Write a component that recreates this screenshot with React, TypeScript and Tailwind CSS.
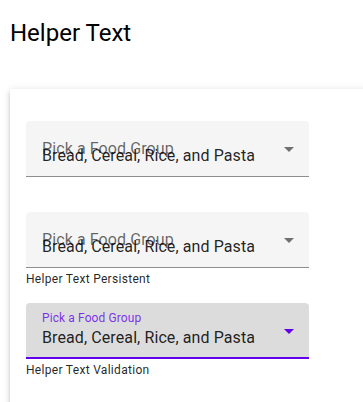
import React from "react";

function Arrow({ color }: { color: string }) {
  return (
    <svg width="24" height="24" viewBox="0 0 24 24" className="absolute right-[8px] top-[16px]">
      <path d="M7 10l5 5 5-5z" fill={color} />
    </svg>
  );
}

function Select({
  focused,
  helper,
  showHelper,
}: {
  focused?: boolean;
  helper?: string;
  showHelper?: boolean;
}) {
  return (
    <div className="flex flex-col w-[283px]">
      <div
        className={
          "relative h-[56px] rounded-t-[4px] " +
          (focused ? "bg-[#dcdcdc]" : "bg-[#f5f5f5]")
        }
      >
        {focused ? (
          <span className="absolute left-[16px] top-[8px] text-[12px] leading-[14px] text-[rgba(98,0,238,0.8)] tracking-[0.1px]">
            Pick a Food Group
          </span>
        ) : (
          <span className="absolute left-[16px] top-[19px] text-[16px] leading-[18px] text-[rgba(0,0,0,0.6)] tracking-[0.1px]">
            Pick a Food Group
          </span>
        )}
        <div className="pl-[16px] pt-[21px] text-[16px] leading-[28px] text-[rgba(0,0,0,0.87)] tracking-[0.1px]">
          Bread, Cereal, Rice, and Pasta
        </div>
        <Arrow color={focused ? "#6200ee" : "rgba(0,0,0,0.54)"} />
        <div
          className={
            "absolute left-0 right-0 bottom-0 " +
            (focused ? "h-[2px] bg-[#6200ee]" : "h-[1px] bg-[rgba(0,0,0,0.42)]")
          }
        />
      </div>
      <div className="h-[19px] pt-[3px] text-[12px] leading-[16px] text-[rgba(0,0,0,0.87)] tracking-[0.3px]">
        {showHelper ? helper : ""}
      </div>
    </div>
  );
}

export default function App() {
  return (
    <div
      className="w-screen h-screen overflow-hidden bg-white"
      style={{ fontFamily: "Roboto, 'Liberation Sans', sans-serif" }}
    >
      <div className="pl-[10px] pt-[17px]">
        <h2 className="text-[24px] leading-[32px] font-normal text-black">Helper Text</h2>
        <div className="mt-[40px] w-[420px] h-[400px] bg-white shadow-[0_3px_3px_-2px_rgba(0,0,0,0.2),0_3px_4px_0_rgba(0,0,0,0.14),0_1px_8px_0_rgba(0,0,0,0.12)] pt-[32px] px-[16px] flex flex-col gap-[16px]">
          <Select helper="Helper Text" showHelper={false} />
          <Select helper="Helper Text Persistent" showHelper />
          <Select focused helper="Helper Text Validation" showHelper />
        </div>
      </div>
    </div>
  );
}
